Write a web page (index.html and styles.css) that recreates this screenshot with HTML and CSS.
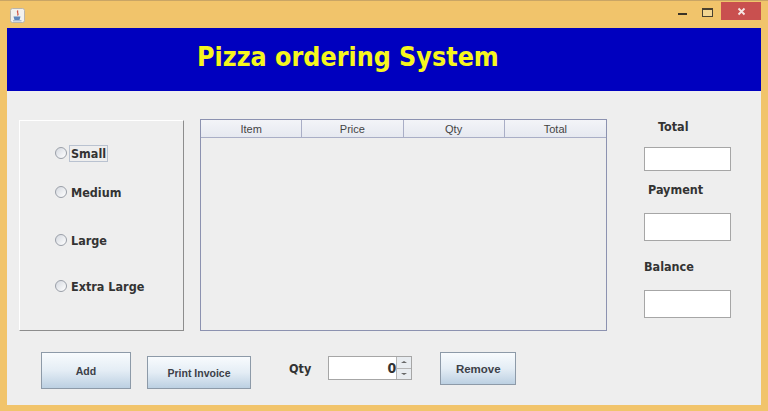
FILE: index.html
```html
<!DOCTYPE html>
<html lang="en">
<head>
    <meta charset="UTF-8">
    <meta name="viewport" content="width=device-width, initial-scale=1.0">
    <title>Pizza ordering System</title>
    <link rel="stylesheet" href="styles.css">
</head>
<body>
    <div class="frame">
        <div class="titlebar">
            <svg class="app-icon" width="15" height="15" viewBox="0 0 15 15">
                <rect x="0.5" y="0.5" width="14" height="14" rx="2" fill="#f3f1ee" stroke="#b9b4ac"/>
                <path d="M8 2.5C6 4.5 9.5 5.5 7.5 7.5" fill="none" stroke="#d0574c" stroke-width="1.3"/>
                <path d="M3.5 8.5h7l-1 3.5h-5z" fill="#5f86bd"/>
                <path d="M3 12.8h8.5" stroke="#8aa5cc" stroke-width="1"/>
            </svg>
            <div class="win-buttons">
                <span class="win-min"></span>
                <span class="win-max"></span>
                <span class="win-close">
                    <svg width="9" height="9" viewBox="0 0 9 9">
                        <path d="M1.5 1.5l6 6M7.5 1.5l-6 6" stroke="#f6e6e4" stroke-width="1.8"/>
                    </svg>
                </span>
            </div>
        </div>

        <div class="content">
            <div class="banner">
                <h1>Pizza ordering System</h1>
            </div>

            <div class="main-row">
                <div class="size-panel">
                    <label class="size-row row-small"><span class="radio"></span><span class="size-name focused">Small</span></label>
                    <label class="size-row row-medium"><span class="radio"></span><span class="size-name">Medium</span></label>
                    <label class="size-row row-large"><span class="radio"></span><span class="size-name">Large</span></label>
                    <label class="size-row row-xlarge"><span class="radio"></span><span class="size-name">Extra Large</span></label>
                </div>

                <div class="order-table">
                    <div class="table-head">
                        <div class="head-cell">Item</div>
                        <div class="head-cell">Price</div>
                        <div class="head-cell">Qty</div>
                        <div class="head-cell">Total</div>
                    </div>
                </div>

                <div class="totals">
                    <div class="totals-label label-total">Total</div>
                    <div class="field field-total"></div>
                    <div class="totals-label label-payment">Payment</div>
                    <div class="field field-payment"></div>
                    <div class="totals-label label-balance">Balance</div>
                    <div class="field field-balance"></div>
                </div>
            </div>

            <div class="button-row">
                <button class="btn btn-add">Add</button>
                <button class="btn btn-print">Print Invoice</button>
                <span class="qty-label">Qty</span>
                <div class="spinner">
                    <div class="spinner-value">0</div>
                    <div class="spinner-arrows">
                        <span class="arrow-up"></span>
                        <span class="arrow-down"></span>
                    </div>
                </div>
                <button class="btn btn-remove">Remove</button>
            </div>
        </div>
    </div>
</body>
</html>
```
FILE: styles.css
```css
html, body {
    margin: 0;
    padding: 0;
}
body {
    width: 768px;
    height: 411px;
    overflow: hidden;
    font-family: "DejaVu Sans Condensed", "DejaVu Sans", sans-serif;
    font-stretch: condensed;
    background: #f1c46b;
}
.frame {
    height: 411px;
    display: flex;
    flex-direction: column;
    box-sizing: border-box;
    padding: 0 7px 6px 7px;
    border-top: 1px solid #c9a565;
}
.titlebar {
    height: 27px;
    flex-shrink: 0;
    display: flex;
    align-items: flex-start;
    justify-content: space-between;
}
.app-icon {
    margin: 7px 0 0 3px;
}
.win-buttons {
    display: flex;
    align-items: flex-start;
}
.win-min {
    width: 9px;
    height: 2px;
    margin: 12px 0 0 0;
    background: #3b3326;
}
.win-max {
    width: 9px;
    height: 6px;
    margin: 7px 0 0 15px;
    border: 1px solid #4a4130;
    border-top-width: 2px;
    background: #f3d591;
}
.win-close {
    width: 40px;
    height: 18px;
    margin: 1px 0 0 8px;
    background: #c9504f;
    display: flex;
    align-items: center;
    justify-content: center;
}
.content {
    flex: 1;
    background: #eeeeee;
    display: flex;
    flex-direction: column;
}
.banner {
    height: 63px;
    background: #0000bf;
    display: flex;
    align-items: center;
    padding-left: 190px;
}
.banner h1 {
    margin: -6px 0 0 0;
    font-size: 26.6px;
    font-weight: bold;
    color: #f6f61e;
}
.main-row {
    display: flex;
    align-items: flex-start;
    padding: 28px 0 0 12px;
}
.size-panel {
    width: 165px;
    height: 211px;
    box-sizing: border-box;
    margin-top: 1px;
    padding-left: 35px;
    border: 1px solid #8d8d8d;
    border-top-color: #ffffff;
    border-left-color: #ffffff;
    display: flex;
    flex-direction: column;
}
.size-row {
    display: flex;
    align-items: center;
    height: 18px;
    font-size: 12.5px;
    font-weight: bold;
    color: #333333;
}
.row-small { margin-top: 23px; }
.row-medium { margin-top: 21px; }
.row-large { margin-top: 30px; }
.row-xlarge { margin-top: 28px; }
.radio {
    width: 10px;
    height: 10px;
    border-radius: 50%;
    border: 1px solid #9a9fa8;
    background: linear-gradient(135deg, #d5d9e0, #ffffff);
    margin-right: 2px;
}
.size-name {
    padding: 0 1px;
    border: 1px solid transparent;
}
.size-name.focused {
    border-color: #b9c2d0;
}
.order-table {
    width: 407px;
    height: 212px;
    box-sizing: border-box;
    margin-left: 16px;
    border: 1px solid #8c92b0;
}
.table-head {
    display: grid;
    grid-template-columns: repeat(4, 1fr);
    height: 17px;
    border-bottom: 1px solid #a9aec6;
    background: linear-gradient(#f3f4f8, #e6e9f0);
}
.head-cell {
    font-family: "Liberation Sans", sans-serif;
    font-stretch: normal;
    font-size: 11px;
    line-height: 18px;
    text-align: center;
    color: #444444;
    border-right: 1px solid #a9aec6;
}
.head-cell:last-child {
    border-right: 0;
}
.totals {
    width: 87px;
    margin-left: 37px;
    display: flex;
    flex-direction: column;
}
.totals-label {
    height: 16px;
    line-height: 16px;
    font-size: 12.5px;
    font-weight: bold;
    color: #333333;
}
.label-total { margin: 0 0 12px 14px; }
.label-payment { margin: 11px 0 15px 4px; }
.label-balance { margin: 18px 0 15px 0; }
.field {
    background: #ffffff;
    border: 1px solid #a6a6a6;
    box-sizing: border-box;
}
.field-total { height: 24px; }
.field-payment { height: 28px; }
.field-balance { height: 28px; }
.button-row {
    display: flex;
    align-items: flex-start;
    padding: 21px 0 0 34px;
}
.btn {
    box-sizing: border-box;
    padding: 0;
    border: 1px solid #8d9aa8;
    background: linear-gradient(#f8fbfd, #e4edf5 50%, #bcd0e2);
    font-family: "Liberation Sans", sans-serif;
    font-stretch: normal;
    font-size: 10.5px;
    font-weight: bold;
    color: #3c4048;
}
.btn-add {
    width: 90px;
    height: 37px;
}
.btn-print {
    width: 104px;
    height: 33px;
    margin: 4px 0 0 16px;
}
.qty-label {
    margin: 9px 0 0 38px;
    font-size: 12.5px;
    font-weight: bold;
    color: #333333;
}
.spinner {
    width: 84px;
    height: 24px;
    box-sizing: border-box;
    margin: 4px 0 0 17px;
    border: 1px solid #a6a6a6;
    background: #ffffff;
    display: flex;
}
.spinner-value {
    flex: 1;
    text-align: right;
    font-size: 14px;
    font-weight: bold;
    line-height: 22px;
    color: #333333;
}
.spinner-arrows {
    width: 14px;
    display: flex;
    flex-direction: column;
    border-left: 1px solid #b5b5b5;
    background: #e8ecf0;
}
.arrow-up, .arrow-down {
    flex: 1;
    display: flex;
    align-items: center;
    justify-content: center;
}
.arrow-up {
    border-bottom: 1px solid #b5b5b5;
}
.arrow-up::before {
    content: "";
    border: 3px solid transparent;
    border-top: 0;
    border-bottom: 2px solid #666666;
}
.arrow-down::before {
    content: "";
    border: 3px solid transparent;
    border-bottom: 0;
    border-top: 2px solid #666666;
}
.btn-remove {
    width: 76px;
    height: 33px;
    margin-left: 28px;
    font-size: 11.5px;
}
```
